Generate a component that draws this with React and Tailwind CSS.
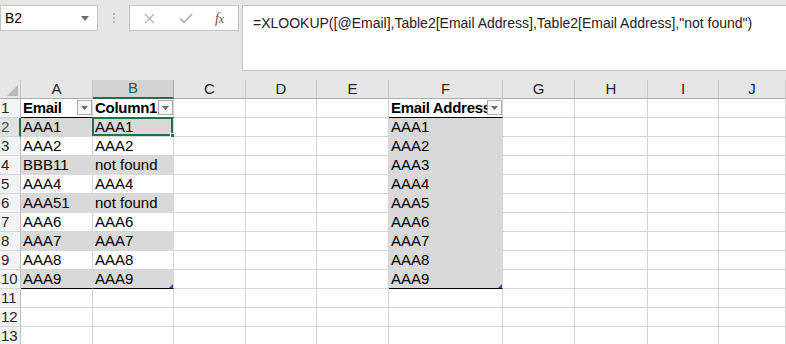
import React from 'react';

const COLS = ['A', 'B', 'C', 'D', 'E', 'F', 'G', 'H', 'I', 'J'];

const tableA = ['AAA1', 'AAA2', 'BBB11', 'AAA4', 'AAA51', 'AAA6', 'AAA7', 'AAA8', 'AAA9'];
const tableB = ['AAA1', 'AAA2', 'not found', 'AAA4', 'not found', 'AAA6', 'AAA7', 'AAA8', 'AAA9'];
const tableF = ['AAA1', 'AAA2', 'AAA3', 'AAA4', 'AAA5', 'AAA6', 'AAA7', 'AAA8', 'AAA9'];

function FilterButton() {
    return (
        <div className="absolute right-0 top-[1px] w-[15px] h-[15px] border border-[#acacac] bg-[#f7f7f7] flex items-center justify-center">
            <svg width="7" height="4" viewBox="0 0 7 4"><path d="M0 0h7L3.5 4z" fill="#6b6b6b" /></svg>
        </div>
    );
}

function HeaderCell({ label, selected }) {
    return (
        <div
            className={
                selected
                    ? 'h-[19px] bg-[#d2d2d2] border-r border-[#ababab] border-b-2 border-b-[#217346] flex items-center justify-center text-[#1e5c3a]'
                    : 'h-[19px] bg-[#e6e6e6] border-r border-[#c8c8c8] border-b border-b-[#ababab] flex items-center justify-center text-[#262626]'
            }
        >
            {label}
        </div>
    );
}

function Cell({ row, col }) {
    // table 1: A..B rows 1..10, table 2: F rows 1..10
    const inT1 = (col === 'A' || col === 'B') && row >= 1 && row <= 10;
    const inT2 = col === 'F' && row >= 1 && row <= 10;
    const isHeader = (inT1 || inT2) && row === 1;
    const isLast = (inT1 || inT2) && row === 10;
    const gray = (inT1 && row > 1 && row % 2 === 0) || (inT2 && row > 1);

    let text = '';
    if (inT1 && row === 1) text = col === 'A' ? 'Email' : 'Column1';
    else if (inT1) text = col === 'A' ? tableA[row - 2] : tableB[row - 2];
    else if (inT2 && row === 1) text = 'Email Address';
    else if (inT2) text = tableF[row - 2];

    const selected = col === 'B' && row === 2;

    let cls = 'relative h-[19px] flex items-center pl-[2px] whitespace-nowrap ';
    cls += gray ? 'bg-[#d9d9d9] border-r border-r-[#d9d9d9] ' : 'bg-white border-r border-r-[#d4d4d4] ';
    if (isHeader || isLast) cls += 'border-b border-b-black ';
    else if (gray) cls += 'border-b border-b-[#d9d9d9] ';
    else cls += 'border-b border-b-[#d4d4d4] ';

    return (
        <div className={cls}>
            {isHeader ? (
                <>
                    <span className="overflow-hidden font-bold tracking-[-0.3px]">{text}</span>
                    <FilterButton />
                </>
            ) : (
                <span>{text}</span>
            )}
            {selected && (
                <>
                    <div className="absolute -left-px -top-px right-0 bottom-0 border-2 border-[#217346] pointer-events-none" />
                    <div className="absolute right-[-3px] bottom-[-3px] w-[6px] h-[6px] bg-[#217346] border border-white" />
                </>
            )}
            {isLast && (col === 'B' || col === 'F') && (
                <svg className="absolute right-0 bottom-0" width="4" height="4" viewBox="0 0 4 4"><path d="M4 0v4H0z" fill="#3b4ea3" /></svg>
            )}
        </div>
    );
}

export default function App() {
    const rows = Array.from({ length: 13 }, (_, i) => i + 1);

    return (
        <div className="w-[786px] h-[344px] overflow-hidden bg-[#e6e6e6] text-[15px] text-black" style={{ fontFamily: '"Liberation Sans", Arial, sans-serif' }}>
            {/* formula bar strip */}
            <div className="h-[80px] flex items-start pt-[5px]">
                <div className="w-[98px] h-[26px] bg-white border border-[#c6c6c6] flex items-center justify-between pl-[4px] pr-[8px] text-[14px]">
                    <span>B2</span>
                    <svg width="8" height="5" viewBox="0 0 8 5"><path d="M0 0h8L4 5z" fill="#6d6d6d" /></svg>
                </div>
                <div className="w-[31px] h-[26px] flex flex-col items-center justify-center gap-[2px]">
                    <div className="w-[2px] h-[2px] bg-[#b4b4b4]" />
                    <div className="w-[2px] h-[2px] bg-[#b4b4b4]" />
                    <div className="w-[2px] h-[2px] bg-[#b4b4b4]" />
                </div>
                <div className="w-[110px] h-[26px] bg-white border border-[#c6c6c6] flex items-center">
                    <div className="w-[36px] flex justify-center pl-[3px]">
                        <svg width="11" height="11" viewBox="0 0 11 11"><path d="M1 1l9 9M10 1l-9 9" stroke="#b3b3b3" strokeWidth="1.3" /></svg>
                    </div>
                    <div className="w-[38px] flex justify-center pl-[2px]">
                        <svg width="14" height="11" viewBox="0 0 14 11"><path d="M1 5.5l4 4L13 1" stroke="#b3b3b3" strokeWidth="1.8" fill="none" /></svg>
                    </div>
                    <div className="flex-1 flex justify-center pr-[3px] text-[14px] italic text-[#555]" style={{ fontFamily: '"Liberation Serif", serif' }}>
                        <span>f<span className="text-[12px]">x</span></span>
                    </div>
                </div>
                <div className="ml-[3px] flex-1 h-[66px] bg-white border border-r-0 border-[#c6c6c6] pl-[10px] pt-[7px] text-[14px] text-[#222] whitespace-nowrap">
                    =XLOOKUP([@Email],Table2[Email Address],Table2[Email Address],"not found")
                </div>
            </div>

            {/* sheet grid */}
            <div className="grid grid-cols-[21px_72px_81px_72px_71px_72px_114px_72px_73px_71px_1fr]">
                <div className="h-[19px] bg-[#e6e6e6] border-r border-[#c8c8c8] border-b border-b-[#ababab] flex items-end justify-end pr-[2px] pb-[2px]">
                    <svg width="11" height="11" viewBox="0 0 11 11"><path d="M11 0v11H0z" fill="#b9b9b9" /></svg>
                </div>
                {COLS.map((c) => (
                    <HeaderCell key={c} label={c} selected={c === 'B'} />
                ))}

                {rows.map((r) => (
                    <React.Fragment key={r}>
                        <div
                            className={
                                r === 2
                                    ? 'h-[19px] bg-[#e1e1e1] border-r-2 border-r-[#217346] border-b border-b-[#d4d4d4] flex items-center pl-[1px] text-[#1e5c3a]'
                                    : 'h-[19px] bg-[#f3f3f3] border-r border-r-[#bfbfbf] border-b border-b-[#d4d4d4] flex items-center pl-[1px] text-[#262626]'
                            }
                        >
                            {r}
                        </div>
                        {COLS.map((c) => (
                            <Cell key={c} row={r} col={c} />
                        ))}
                    </React.Fragment>
                ))}
            </div>
        </div>
    );
}
